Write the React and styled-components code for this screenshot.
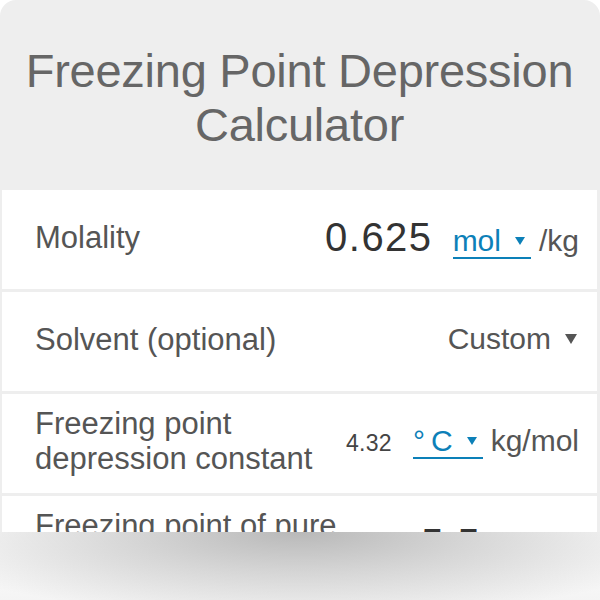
import React from "react";
import styled, { createGlobalStyle } from "styled-components";

const GlobalStyle = createGlobalStyle`
  body {
    margin: 0;
    background: #fff;
    font-family: "Liberation Sans", Arial, sans-serif;
  }
`;

const Page = styled.div`
  width: 600px;
  height: 600px;
  overflow: hidden;
  background: #fff;
`;

const Card = styled.div`
  height: 532px;
  overflow: hidden;
  background: #eee;
  border-radius: 16px 16px 0 0;
  padding: 0 3px 0 2px;
`;

const Title = styled.h1`
  box-sizing: border-box;
  height: 190px;
  margin: 0;
  padding-top: 44px;
  text-align: center;
  font-size: 47px;
  font-weight: normal;
  line-height: 54px;
  letter-spacing: -0.25px;
  color: #666;
`;

const Row = styled.div`
  box-sizing: border-box;
  min-height: 99px;
  margin-bottom: 3px;
  padding: 0 18px 5px 33px;
  display: flex;
  align-items: center;
  justify-content: space-between;
  background: #fff;
`;

const Label = styled.div`
  font-size: 31px;
  line-height: 35px;
  color: #555;
`;

const Controls = styled.div`
  display: flex;
  align-items: baseline;
  color: #555;
  font-size: 30px;
`;

const Value = styled.span`
  font-size: ${(p) => (p.small ? "23px" : "40px")};
  letter-spacing: ${(p) => (p.small ? "0.3px" : "1.5px")};
  color: ${(p) => (p.small ? "#444" : "#333")};
  margin-right: ${(p) => (p.small ? "21px" : "20px")};
`;

const Unit = styled.span`
  display: inline-flex;
  align-items: center;
  color: #0c80b8;
  font-size: 30px;
  line-height: 32px;
  border-bottom: 2px solid #0c80b8;
  margin-right: 8px;
`;

const Caret = styled.span`
  display: inline-block;
  width: 0;
  height: 0;
  margin: 0 6px 0 14px;
  border-left: 5px solid transparent;
  border-right: 5px solid transparent;
  border-top: 8px solid #0c80b8;
`;

const Select = styled.span`
  display: inline-flex;
  align-items: center;
  font-size: 30px;
  color: #555;
`;

const SelectCaret = styled.span`
  display: inline-block;
  width: 0;
  height: 0;
  margin: 0 2px 0 14px;
  border-left: 6px solid transparent;
  border-right: 6px solid transparent;
  border-top: 10px solid #555;
`;

const Shadow = styled.div`
  height: 68px;
  background: radial-gradient(
      ellipse 68% 125% at 50% 0%,
      rgba(0, 0, 0, 0.28) 0%,
      rgba(0, 0, 0, 0.15) 45%,
      rgba(0, 0, 0, 0) 100%
    ),
    linear-gradient(#fff, #f4f4f4);
`;

const App = () => {
  return (
    <Page>
      <GlobalStyle />
      <Card>
        <Title>
          Freezing Point Depression
          <br />
          Calculator
        </Title>
        <Row>
          <Label>Molality</Label>
          <Controls>
            <Value>0.625</Value>
            <Unit>
              mol
              <Caret />
            </Unit>
            <span>/kg</span>
          </Controls>
        </Row>
        <Row>
          <Label>Solvent (optional)</Label>
          <Select>
            Custom
            <SelectCaret />
          </Select>
        </Row>
        <Row>
          <Label>
            Freezing point
            <br />
            depression constant
          </Label>
          <Controls>
            <Value small>4.32</Value>
            <Unit>
              °{"\u2009"}C
              <Caret />
            </Unit>
            <span>kg/mol</span>
          </Controls>
        </Row>
        <Row>
          <Label>
            Freezing point of pure
            <br />
            solvent
          </Label>
          <Controls>
            <Value>5.5</Value>
            <Unit>
              °{"\u2009"}C
              <Caret />
            </Unit>
          </Controls>
        </Row>
      </Card>
      <Shadow />
    </Page>
  );
};

export default App;
